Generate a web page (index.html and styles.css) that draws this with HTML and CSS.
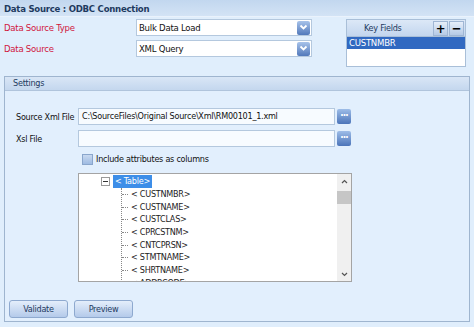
FILE: index.html
```html
<!DOCTYPE html>
<html lang="en">
<head>
  <meta charset="UTF-8" />
  <title>Data Source : ODBC Connection</title>
  <link rel="stylesheet" href="styles.css">
</head>
<body>

  <div class="title-bar">Data Source : ODBC Connection</div>

  <div class="top">
    <div class="fields">
      <div class="field-row">
        <label class="req-label">Data Source Type</label>
        <div class="combo">
          <span class="combo-text">Bulk Data Load</span>
          <span class="combo-btn">
            <svg width="9" height="7" viewBox="0 0 9 7"><path d="M1.5 1.5 L4.5 4.5 L7.5 1.5" fill="none" stroke="#fff" stroke-width="1.8"/></svg>
          </span>
        </div>
      </div>
      <div class="field-row">
        <label class="req-label">Data Source</label>
        <div class="combo">
          <span class="combo-text">XML Query</span>
          <span class="combo-btn">
            <svg width="9" height="7" viewBox="0 0 9 7"><path d="M1.5 1.5 L4.5 4.5 L7.5 1.5" fill="none" stroke="#fff" stroke-width="1.8"/></svg>
          </span>
        </div>
      </div>
    </div>

    <div class="key-fields">
      <div class="key-head">
        <span class="key-title">Key Fields</span>
        <span class="mini-btn">+</span>
        <span class="mini-btn">&minus;</span>
      </div>
      <div class="key-list">
        <div class="key-item selected">CUSTNMBR</div>
      </div>
    </div>
  </div>

  <div class="settings">
    <div class="group-head">Settings</div>
    <div class="group-body">
      <div class="file-row">
        <label>Source Xml File</label>
        <div class="textbox">C:\SourceFiles\Original Source\Xml\RM00101_1.xml</div>
        <span class="dots-btn">&middot;&middot;&middot;</span>
      </div>
      <div class="file-row">
        <label>Xsl File</label>
        <div class="textbox"></div>
        <span class="dots-btn">&middot;&middot;&middot;</span>
      </div>
      <div class="check-row">
        <span class="checkbox"></span>
        <span>Include attributes as columns</span>
      </div>

      <div class="tree">
        <div class="tree-content">
          <div class="tree-root">
            <span class="expander"></span>
            <span class="node selected">&lt; Table&gt;</span>
          </div>
          <div class="tree-children">
            <div class="node child">&lt; CUSTNMBR&gt;</div>
            <div class="node child">&lt; CUSTNAME&gt;</div>
            <div class="node child">&lt; CUSTCLAS&gt;</div>
            <div class="node child">&lt; CPRCSTNM&gt;</div>
            <div class="node child">&lt; CNTCPRSN&gt;</div>
            <div class="node child">&lt; STMTNAME&gt;</div>
            <div class="node child">&lt; SHRTNAME&gt;</div>
            <div class="node child">&lt; ADDRCODE&gt;</div>
          </div>
        </div>
        <div class="scrollbar">
          <svg width="7" height="5" viewBox="0 0 7 5"><path d="M1 4 L3.5 1.5 L6 4" fill="none" stroke="#555" stroke-width="1.2"/></svg>
          <div class="track"><div class="thumb"></div></div>
          <svg width="7" height="5" viewBox="0 0 7 5"><path d="M1 1 L3.5 3.5 L6 1" fill="none" stroke="#555" stroke-width="1.2"/></svg>
        </div>
      </div>

      <div class="actions">
        <button>Validate</button>
        <button>Preview</button>
      </div>
    </div>
  </div>

</body>
</html>
```

FILE: styles.css
```css
* {
  margin: 0;
  padding: 0;
  box-sizing: border-box;
}

body {
  font-family: "DejaVu Sans Condensed", "DejaVu Sans", sans-serif;
  font-size: 9px;
  letter-spacing: -0.25px;
  color: #111;
  background: #e0eefc;
  width: 474px;
  height: 327px;
  overflow: hidden;
  white-space: nowrap;
}

.title-bar {
  height: 17px;
  padding: 3px 4px 0;
  font-weight: bold;
  font-size: 9.5px;
  color: #1e3a5f;
  background: linear-gradient(#c2d7ef, #d3e3f5);
  border-bottom: 1px solid #eaf2fc;
}

/* Top area */
.top {
  display: flex;
  padding: 2px 0 0 4px;
  height: 50px;
}

.fields {
  width: 308px;
}

.field-row {
  display: flex;
  align-items: center;
  margin-bottom: 4px;
  font-size: 9.5px;
}

.req-label {
  width: 132px;
  color: #d0163c;
}

.combo {
  flex: 1;
  height: 17px;
  display: flex;
  align-items: center;
  background: #fff;
  border: 1px solid #b4c8de;
  padding-left: 2px;
}

.combo-text {
  flex: 1;
}

.combo-btn {
  width: 13px;
  height: 14px;
  margin-right: 1px;
  border-radius: 2px;
  background: linear-gradient(#a8c3ea, #5279bb);
  display: flex;
  align-items: center;
  justify-content: center;
}

.key-fields {
  margin-left: 34px;
  width: 120px;
  height: 48px;
  border: 1px solid #a9bfd8;
  background: #fff;
}

.key-head {
  height: 17px;
  display: flex;
  align-items: center;
  background: linear-gradient(#dce8f7, #c3d6ee);
  border-bottom: 1px solid #a9bfd8;
}

.key-title {
  flex: 1;
  padding-left: 17px;
  color: #1e3a5f;
}

.mini-btn {
  width: 15px;
  height: 15px;
  margin-right: 1px;
  display: flex;
  align-items: center;
  justify-content: center;
  font-weight: bold;
  font-size: 13px;
  color: #000;
  background: linear-gradient(#e6eef9, #b5cae6);
  border: 1px solid #9fb6d4;
}

.key-item {
  height: 12px;
  line-height: 12px;
  padding-left: 2px;
  font-size: 9.5px;
}

.key-item.selected {
  background: #3169c1;
  color: #fff;
}

/* Settings group */
.settings {
  margin: 9px 4px 0 4px;
  height: 246px;
  border: 1px solid #9fb5cf;
  background: #e2effd;
}

.group-head {
  height: 14px;
  padding: 1px 0 0 8px;
  color: #1e3a5f;
  background: linear-gradient(#d9e6f6, #c4d7ee);
  border-bottom: 1px solid #b0c4dc;
}

.group-body {
  padding: 17px 0 0 11px;
}

.file-row {
  display: flex;
  align-items: center;
  margin-bottom: 5px;
}

.file-row label {
  width: 62px;
}

.textbox {
  width: 257px;
  height: 17px;
  line-height: 15px;
  padding-left: 3px;
  background: #f7fbff;
  border: 1px solid #b4c8de;
  overflow: hidden;
}

.dots-btn {
  width: 14px;
  height: 15px;
  margin-left: 2px;
  border-radius: 2px;
  background: linear-gradient(#9ebde8, #4b74b9);
  color: #fff;
  font-weight: bold;
  font-size: 10px;
  line-height: 13px;
  text-align: center;
  letter-spacing: -1px;
}

.check-row {
  display: flex;
  align-items: center;
  margin: 2px 0 0 66px;
  height: 14px;
}

.checkbox {
  width: 11px;
  height: 11px;
  margin-right: 3px;
  border: 1px solid #8aa6cc;
  background: linear-gradient(#c8d9f0, #9fbbe2);
}

.tree {
  display: flex;
  margin: 7px 0 0 62px;
  width: 274px;
  height: 109px;
  border: 1px solid #a4a4a4;
  background: #fff;
  overflow: hidden;
}

.tree-content {
  flex: 1;
  padding: 1px 0 0 22px;
}

.tree-root {
  display: flex;
  align-items: center;
  height: 13px;
}

.expander {
  width: 9px;
  height: 9px;
  margin-right: 3px;
  border: 1px solid #9a9a9a;
  position: relative;
  background: #fff;
}

.expander::after {
  content: "";
  position: absolute;
  left: 1px;
  top: 3px;
  width: 5px;
  height: 1px;
  background: #333;
}

.node {
  height: 13px;
  line-height: 13px;
  padding: 0 2px;
  color: #222;
}

.node.selected {
  background: #3d8ee8;
  color: #fff;
}

.tree-children {
  margin-left: 20px;
  border-left: 1px dotted #888;
}

.node.child {
  height: 12.7px;
  line-height: 12.7px;
  position: relative;
  padding-left: 9px;
}

.node.child::before {
  content: "";
  position: absolute;
  left: 0;
  top: 6px;
  width: 6px;
  border-top: 1px dotted #888;
}

.scrollbar {
  width: 14px;
  display: flex;
  flex-direction: column;
  align-items: center;
  background: #f0f0f0;
  padding: 5px 0 4px;
}

.track {
  flex: 1;
  width: 100%;
  padding-top: 7px;
}

.thumb {
  height: 13px;
  background: #c6c6c6;
}

.actions {
  display: flex;
  gap: 6px;
  margin: 18px 0 0 -7px;
}

.actions button {
  width: 59px;
  height: 18px;
  font-family: inherit;
  font-size: 9px;
  letter-spacing: -0.25px;
  color: #1e3a5f;
  border: 1px solid #8ea9cf;
  border-radius: 3px;
  background: linear-gradient(#e4eefb, #b4caea);
}
```
